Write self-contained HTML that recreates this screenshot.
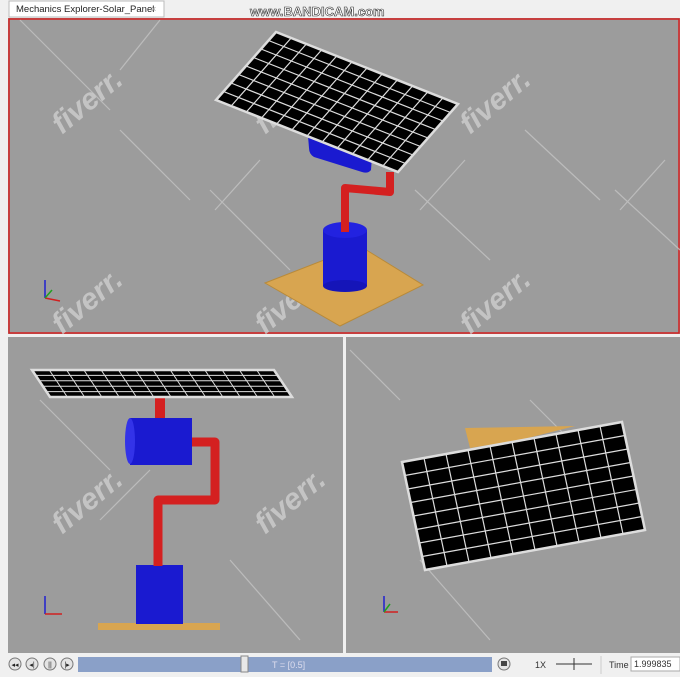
<!DOCTYPE html>
<html><head><style>
html,body{margin:0;padding:0;width:680px;height:677px;overflow:hidden;background:#f0f0f0;font-family:"Liberation Sans",sans-serif}
</style></head><body>
<svg width="680" height="677" xmlns="http://www.w3.org/2000/svg" style="position:absolute;left:0;top:0">
<!-- top tab bar -->
<rect x="0" y="0" width="680" height="17" fill="#f0f0f0"/>
<rect x="9" y="1" width="155" height="16" fill="#fff" stroke="#bbb"/>
<text x="16" y="12" font-size="9.5" fill="#222">Mechanics Explorer-Solar_Panel</text>
<text x="151" y="12" font-size="9" fill="#999">×</text>
<text x="250" y="16" font-size="13" font-weight="bold" fill="#fff" stroke="#333" stroke-width="0.6">www.BANDICAM.com</text>
<rect x="0" y="17" width="8" height="636" fill="#f0f0f0"/>
<!-- panels -->
<rect x="8" y="18" width="672" height="316" fill="#9c9c9c"/>
<rect x="9" y="19" width="670" height="314" fill="none" stroke="#d42020" stroke-width="1.5"/>
<rect x="8" y="334" width="672" height="3" fill="#f0f0f0"/>
<rect x="8" y="337" width="335" height="316" fill="#9c9c9c"/>
<rect x="343" y="337" width="3" height="316" fill="#f0f0f0"/>
<rect x="346" y="337" width="334" height="316" fill="#9c9c9c"/>
<!-- watermark lines -->
<g stroke="#c4c4c4" stroke-width="1.2" opacity="0.8">
<line x1="20" y1="20" x2="110" y2="110"/><line x1="160" y1="20" x2="120" y2="70"/>
<line x1="215" y1="210" x2="260" y2="160"/><line x1="210" y1="190" x2="290" y2="270"/>
<line x1="420" y1="210" x2="465" y2="160"/><line x1="415" y1="190" x2="490" y2="260"/>
<line x1="620" y1="210" x2="665" y2="160"/><line x1="615" y1="190" x2="680" y2="250"/>
<line x1="120" y1="130" x2="190" y2="200"/><line x1="525" y1="130" x2="600" y2="200"/>
<line x1="40" y1="400" x2="110" y2="470"/><line x1="150" y1="470" x2="100" y2="520"/>
<line x1="350" y1="350" x2="400" y2="400"/><line x1="530" y1="400" x2="600" y2="470"/>
<line x1="230" y1="560" x2="300" y2="640"/><line x1="420" y1="560" x2="490" y2="640"/>
</g>
<g font-size="30" font-weight="bold" fill="#cfcfcf" opacity="0.8" font-style="italic">
<text transform="translate(62,135) rotate(-40)">fiverr.</text>
<text transform="translate(265,135) rotate(-40)">fiverr.</text>
<text transform="translate(470,135) rotate(-40)">fiverr.</text>
<text transform="translate(62,335) rotate(-40)">fiverr.</text>
<text transform="translate(265,335) rotate(-40)">fiverr.</text>
<text transform="translate(470,335) rotate(-40)">fiverr.</text>
<text transform="translate(62,535) rotate(-40)">fiverr.</text>
<text transform="translate(265,535) rotate(-40)">fiverr.</text>
<text transform="translate(470,535) rotate(-40)">fiverr.</text>
</g>
<!-- TOP VIEW -->
<polygon points="265,283 360,246 423,285 340,326" fill="#d8a550" stroke="#b88a3a"/>
<rect x="323" y="230" width="44" height="56" fill="#1a1ad0"/>
<ellipse cx="345" cy="286" rx="22" ry="6" fill="#1515b8"/>
<ellipse cx="345" cy="230" rx="22" ry="8" fill="#2222e0"/>
<path d="M345,232 L345,188 L390,192 L390,172" fill="none" stroke="#d42020" stroke-width="8" stroke-linejoin="round"/>
<path d="M308,136 L372,156 L371,170 Q368,174 362,172 L314,157 Q309,154 309,148 Z" fill="#1a1ad0"/>
<g transform="matrix(1.5167,0.6,0.75,-0.85,216,100)">
<rect width="120" height="80" fill="#000" stroke="#ddd" stroke-width="2.5" vector-effect="non-scaling-stroke"/>
<path d="M10,0V80M20,0V80M30,0V80M40,0V80M50,0V80M60,0V80M70,0V80M80,0V80M90,0V80M100,0V80M110,0V80M0,10H120M0,20H120M0,30H120M0,40H120M0,50H120M0,60H120M0,70H120" stroke="#ddd" stroke-width="1.2" vector-effect="non-scaling-stroke"/>
</g>
<g stroke-width="1.5"><line x1="45" y1="298" x2="45" y2="280" stroke="#2020d0"/><line x1="45" y1="298" x2="60" y2="301" stroke="#d02020"/><line x1="45" y1="298" x2="52" y2="290" stroke="#20a020"/></g>
<!-- BOTTOM LEFT -->
<rect x="98" y="623" width="122" height="7" fill="#d8a550"/>
<rect x="136" y="565" width="47" height="59" fill="#1a1ad0"/>
<path d="M158,566 L158,500 L215,500 L215,442 L192,442" fill="none" stroke="#d42020" stroke-width="9" stroke-linejoin="round"/>
<rect x="155" y="396" width="10" height="24" fill="#d42020"/>
<rect x="130" y="418" width="62" height="47" fill="#1a1ad0"/>
<ellipse cx="130" cy="441" rx="5" ry="23" fill="#3333e8"/>
<g transform="matrix(1.7286,0,-0.36,-0.54,50,397)">
<rect width="140" height="50" fill="#000" stroke="#ddd" stroke-width="2.5" vector-effect="non-scaling-stroke"/>
<path d="M10,0V50M20,0V50M30,0V50M40,0V50M50,0V50M60,0V50M70,0V50M80,0V50M90,0V50M100,0V50M110,0V50M120,0V50M130,0V50M0,10H140M0,20H140M0,30H140M0,40H140" stroke="#ddd" stroke-width="1" vector-effect="non-scaling-stroke"/>
</g>
<g stroke-width="1.5"><line x1="45" y1="614" x2="45" y2="596" stroke="#2020d0"/><line x1="45" y1="614" x2="62" y2="614" stroke="#d02020"/></g>
<!-- BOTTOM RIGHT -->
<polygon points="465,428 575,426 520,440 470,448" fill="#d8a550"/>
<g transform="matrix(2.2,-0.4,-0.2875,-1.35,425,570)">
<rect width="100" height="80" fill="#000" stroke="#ddd" stroke-width="2.5" vector-effect="non-scaling-stroke"/>
<path d="M10,0V80M20,0V80M30,0V80M40,0V80M50,0V80M60,0V80M70,0V80M80,0V80M90,0V80M0,10H100M0,20H100M0,30H100M0,40H100M0,50H100M0,60H100M0,70H100" stroke="#ddd" stroke-width="1.2" vector-effect="non-scaling-stroke"/>
</g>
<g stroke-width="1.5"><line x1="384" y1="612" x2="384" y2="596" stroke="#2020d0"/><line x1="384" y1="612" x2="398" y2="612" stroke="#d02020"/><line x1="384" y1="612" x2="390" y2="604" stroke="#20a020"/></g>
<!-- bottom control bar -->
<rect x="0" y="653" width="680" height="24" fill="#f0f0f0"/>
<g fill="#e4e4e4" stroke="#777">
<circle cx="15" cy="664" r="6"/><circle cx="32" cy="664" r="6"/><circle cx="50" cy="664" r="6"/><circle cx="67" cy="664" r="6"/>
</g>
<g fill="#222" font-size="7" text-anchor="middle"><text x="15" y="667">◂◂</text><text x="32" y="667">◂|</text><text x="50" y="667">||</text><text x="67" y="667">|▸</text></g>
<rect x="78" y="657" width="414" height="15" fill="#8aa0c8"/>
<rect x="241" y="656" width="7" height="16" fill="#e8e8e8" stroke="#888"/>
<text x="272" y="668" font-size="9" fill="#dde">T = [0.5]</text>
<circle cx="504" cy="664" r="6" fill="#e4e4e4" stroke="#777"/>
<rect x="501" y="661" width="6" height="5" fill="#444"/>
<text x="535" y="668" font-size="9" fill="#333">1X</text>
<line x1="556" y1="664" x2="592" y2="664" stroke="#333"/><line x1="574" y1="658" x2="574" y2="670" stroke="#333"/>
<line x1="601" y1="656" x2="601" y2="674" stroke="#ccc"/>
<text x="609" y="668" font-size="9" fill="#333">Time</text>
<rect x="631" y="657" width="49" height="14" fill="#fff" stroke="#aaa"/>
<text x="634" y="667" font-size="9" fill="#333">1.999835</text>
</svg>
</body></html>
